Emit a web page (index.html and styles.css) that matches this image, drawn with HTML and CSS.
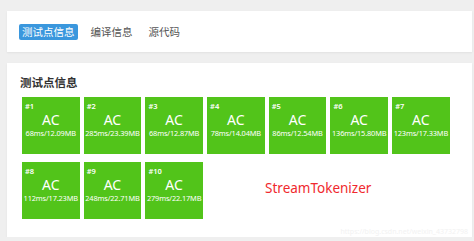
FILE: index.html
```html
<!DOCTYPE html>
<html lang="zh">
<head>
<meta charset="utf-8">
<link rel="stylesheet" href="styles.css">
</head>
<body>
<div class="page">
  <div class="card tabs">
    <span class="tab active">测试点信息</span>
    <span class="tab">编译信息</span>
    <span class="tab">源代码</span>
  </div>
  <div class="card panel">
    <div class="heading">测试点信息</div>
    <div class="grid">
      <div class="case"><span class="no">#1</span><span class="res">AC</span><span class="mem">68ms/12.09MB</span></div>
      <div class="case"><span class="no">#2</span><span class="res">AC</span><span class="mem">285ms/23.39MB</span></div>
      <div class="case"><span class="no">#3</span><span class="res">AC</span><span class="mem">68ms/12.87MB</span></div>
      <div class="case"><span class="no">#4</span><span class="res">AC</span><span class="mem">78ms/14.04MB</span></div>
      <div class="case"><span class="no">#5</span><span class="res">AC</span><span class="mem">86ms/12.54MB</span></div>
      <div class="case"><span class="no">#6</span><span class="res">AC</span><span class="mem">136ms/15.80MB</span></div>
      <div class="case"><span class="no">#7</span><span class="res">AC</span><span class="mem">123ms/17.33MB</span></div>
      <div class="case"><span class="no">#8</span><span class="res">AC</span><span class="mem">112ms/17.23MB</span></div>
      <div class="case"><span class="no">#9</span><span class="res">AC</span><span class="mem">248ms/22.71MB</span></div>
      <div class="case"><span class="no">#10</span><span class="res">AC</span><span class="mem">279ms/22.17MB</span></div>
      <div class="note">StreamTokenizer</div>
    </div>
    <div class="watermark">https://blog.csdn.net/weixin_43732798</div>
  </div>
</div>
</body>
</html>
```

FILE: styles.css
```css
html, body {
  margin: 0;
  padding: 0;
  background: #efefef;
}
body {
  font-family: "Noto Sans", "Noto Sans CJK SC", sans-serif;
  color: #333;
}
.page {
  padding: 11px 2px 0 7px;
  display: flex;
  flex-direction: column;
  gap: 11px;
}
.card {
  background: #fff;
  box-shadow: 0 1px 2px rgba(0,0,0,0.06);
}
.tabs {
  height: 41px;
  display: flex;
  align-items: center;
  padding-left: 12px;
  gap: 10px;
}
.tab {
  font-family: "Noto Sans CJK SC", sans-serif;
  font-size: 10.5px;
  line-height: 16px;
  color: #555;
  padding: 0 3px;
  border-radius: 2px;
}
.tab.active {
  background: #3a97dd;
  color: #fff;
}
.panel {
  position: relative;
  height: 174px;
  box-sizing: border-box;
  padding: 12px 0 0 13px;
}
.heading {
  font-family: "Noto Sans CJK SC", sans-serif;
  font-size: 11.5px;
  font-weight: bold;
  line-height: 15px;
  color: #333;
  margin-bottom: 7px;
}
.grid {
  margin-left: 2px;
  display: grid;
  grid-template-columns: repeat(7, 57.5px);
  grid-auto-rows: 57px;
  column-gap: 4.2px;
  row-gap: 8px;
}
.case {
  background: #52c41a;
  color: #fff;
  display: flex;
  flex-direction: column;
  padding-top: 4px;
  box-sizing: border-box;
  overflow: hidden;
}
.no {
  font-size: 7.5px;
  font-weight: 600;
  line-height: 10px;
  padding-left: 3px;
}
.res {
  font-size: 14px;
  line-height: 18px;
  text-align: center;
}
.mem {
  font-size: 7.4px;
  line-height: 8px;
  text-align: center;
  white-space: nowrap;
  letter-spacing: -0.15px;
}
.note {
  grid-column: 4 / 8;
  align-self: center;
  padding-left: 58px;
  margin-top: -6px;
  font-size: 13.5px;
  color: #f0292e;
}
.watermark {
  position: absolute;
  right: 4px;
  bottom: 1px;
  font-size: 7px;
  color: #f2f2f2;
  white-space: nowrap;
}
```
